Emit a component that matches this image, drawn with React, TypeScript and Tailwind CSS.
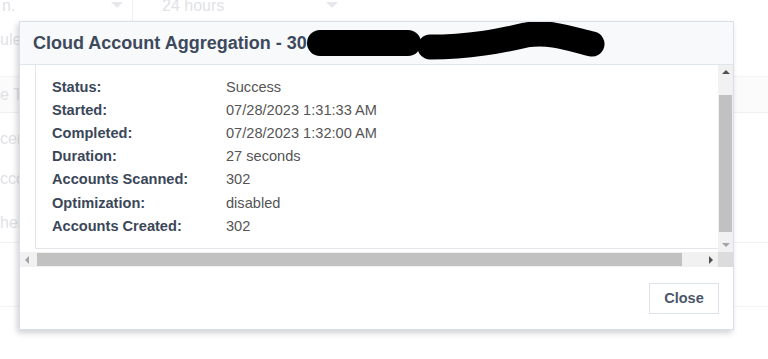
import React from 'react';

const rows: [string, string][] = [
  ['Status:', 'Success'],
  ['Started:', '07/28/2023 1:31:33 AM'],
  ['Completed:', '07/28/2023 1:32:00 AM'],
  ['Duration:', '27 seconds'],
  ['Accounts Scanned:', '302'],
  ['Optimization:', 'disabled'],
  ['Accounts Created:', '302'],
];

function Chevron({ className }: { className?: string }) {
  return (
    <svg width="14" height="8" viewBox="0 0 14 8" className={className}>
      <path d="M1 1l6 6 6-6z" fill="#e6e8eb" />
    </svg>
  );
}

function Arrow({ dir, dark }: { dir: 'up' | 'down' | 'left' | 'right'; dark?: boolean }) {
  const d = {
    up: 'M1 6h8L5 2z',
    down: 'M1 3h8L5 7z',
    left: 'M6 1v8L2 5z',
    right: 'M3 1v8l4-4z',
  }[dir];
  return (
    <svg width="10" height="10" viewBox="0 0 10 10">
      <path d={d} fill={dark ? '#505050' : '#a3a3a3'} />
    </svg>
  );
}

function Background() {
  return (
    <div className="absolute inset-0 overflow-hidden text-[16px] text-[#dfe2e6]">
      {/* filter bar, faded behind the overlay */}
      <div className="flex h-[21px] items-start">
        <span className="w-[110px] -mt-[6px] pl-[2px]">n.</span>
        <Chevron className="mt-[1px]" />
        <div className="ml-[8px] h-[21px] w-px bg-[#f0f1f3]" />
        <span className="ml-[29px] -mt-[6px] w-[163px]">24 hours</span>
        <Chevron className="mt-[1px]" />
      </div>
      <div className="h-[9px]" />
      <div className="h-[20px] leading-[20px]">ule</div>
      <div className="h-[27px] border-b border-[#f3f4f6]" />
      <div className="h-[36px] border-b border-[#eef0f2] bg-[#fbfbfc] leading-[36px]">e T</div>
      <div className="h-[52px] pt-[14px]">cen</div>
      <div className="h-[42px] pt-[2px]">cco</div>
      <div className="h-[35px] pt-[4px]">hen</div>
      <div className="h-[64px] border-t border-[#f1f2f4]" />
      <div className="border-t border-[#f3f4f6]" />
    </div>
  );
}

function Redaction() {
  return (
    <svg
      className="pointer-events-none absolute left-0 top-0"
      width="715"
      height="44"
      viewBox="0 0 715 44"
    >
      <path d="M300 21 L388 21" stroke="#000" strokeWidth="26" strokeLinecap="round" fill="none" />
      <path
        d="M410 25 C450 25 480 19 506 13 C531 9 551 17 572 22"
        stroke="#000"
        strokeWidth="25"
        strokeLinecap="round"
        fill="none"
      />
    </svg>
  );
}

export default function App() {
  return (
    <div className="relative h-[359px] w-[768px] overflow-hidden bg-white font-['Liberation_Sans',Arial,sans-serif]">
      <Background />

      {/* modal */}
      <div className="absolute left-[19px] top-[21px] flex h-[309px] w-[715px] flex-col border border-[#d9dfe8] bg-white shadow-[-2px_3px_6px_rgba(0,0,0,0.18)]">
        <div className="relative flex h-[43px] shrink-0 items-center border-b border-[#dfe5ee] bg-[#f7f9fb] pl-[13px]">
          <h2 className="text-[18px] font-bold text-[#3d4a5c]">Cloud Account Aggregation - 30</h2>
          <Redaction />
        </div>

        {/* scrollable body */}
        <div className="flex h-[202px] shrink-0 flex-col">
          <div className="flex h-[187px]">
            <div className="flex-1 overflow-hidden">
              <div className="ml-[15px] h-[184px] border-b border-l border-[#e3e6ea] pl-[16px] pt-[11px]">
                {rows.map(([label, value]) => (
                  <div key={label} className="flex h-[23.2px] items-center text-[14.6px]">
                    <span className="w-[174px] font-bold text-[#3b4759]">{label}</span>
                    <span className="text-[#555]">{value}</span>
                  </div>
                ))}
              </div>
            </div>
            {/* vertical scrollbar */}
            <div className="flex w-[15px] flex-col bg-[#f1f1f1]">
              <div className="flex h-[15px] items-center justify-center">
                <Arrow dir="up" dark />
              </div>
              <div className="mx-px mt-[15px] h-[137px] bg-[#c1c1c1]" />
              <div className="flex-1" />
              <div className="flex h-[15px] items-center justify-center">
                <Arrow dir="down" />
              </div>
            </div>
          </div>
          {/* horizontal scrollbar */}
          <div className="flex h-[15px] bg-[#f1f1f1]">
            <div className="flex w-[15px] items-center justify-center">
              <Arrow dir="left" />
            </div>
            <div className="my-px ml-[2px] w-[645px] bg-[#c1c1c1]" />
            <div className="flex-1" />
            <div className="flex w-[15px] items-center justify-center">
              <Arrow dir="right" dark />
            </div>
            <div className="w-[15px] bg-[#dcdcdc]" />
          </div>
        </div>

        {/* footer */}
        <div className="flex flex-1 items-start justify-end pr-[14px] pt-[16px]">
          <button
            type="button"
            className="h-[31px] w-[70px] border border-[#dce3ee] bg-white text-[14.5px] font-bold text-[#4b5668]"
          >
            Close
          </button>
        </div>
      </div>
    </div>
  );
}
